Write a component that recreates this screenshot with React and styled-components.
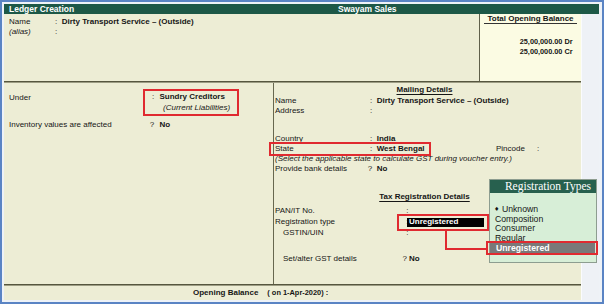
import React from "react";
import styled, { createGlobalStyle } from "styled-components";

const GlobalStyle = createGlobalStyle`
  html, body { margin: 0; padding: 0; background: #fff; }
  body {
    font-family: "Liberation Sans", Arial, sans-serif;
    font-size: 8px;
    color: #161616;
  }
`;

const Stage = styled.div`
  position: relative;
  width: 606px;
  height: 306px;
  overflow: hidden;
`;

const Frame = styled.div`
  width: 604px;
  height: 304px;
  box-sizing: border-box;
  border: 2px solid #5a84c4;
  padding: 2px 3px 2px 2px;
  background: #eef2f7;
  display: flex;
  flex-direction: column;
`;

const TitleBar = styled.div`
  flex: none;
  height: 10px;
  background: #1d5847;
  color: #fff;
  font-weight: bold;
  font-size: 8.5px;
  line-height: 10px;
  display: flex;
  padding-left: 5px;
  white-space: nowrap;
`;

const Title = styled.span`
  flex: none;
  width: 329px;
`;

const Body = styled.div`
  flex: 1;
  display: flex;
  min-height: 0;
`;

const Main = styled.div`
  flex: none;
  width: 577px;
  background: #ededd5;
  display: flex;
  flex-direction: column;
`;

const Strip = styled.div`
  flex: 1;
  background: #eef1f6;
  border-left: 1px solid #fafbfd;
`;

const Top = styled.div`
  flex: none;
  height: 67px;
  display: flex;
`;

const TopLeft = styled.div`
  flex: 1;
  padding: 2.5px 0 0 5px;
`;

const BalancePanel = styled.div`
  flex: none;
  width: 102px;
  box-sizing: border-box;
  border-left: 1px solid #5f5f4a;
  background: #fbfbe3;
`;

const PanelHeading = styled.div`
  width: fit-content;
  margin: 0 auto;
  padding: 0 3px;
  font-weight: bold;
  line-height: 9px;
  border-bottom: 1px solid #333;
`;

const Amounts = styled.div`
  margin-top: 13px;
  padding-right: 8.5px;
  text-align: right;
  font-weight: bold;
  font-size: 7.3px;
  line-height: 10px;
`;

const HLine = styled.div`
  flex: none;
  height: 0;
  border-top: 1px solid #56563f;
  border-bottom: 1px solid #9d9d84;
`;

const Middle = styled.div`
  flex: none;
  height: 201px;
  display: flex;
`;

const LeftCol = styled.div`
  flex: none;
  width: 269px;
  box-sizing: border-box;
  padding: 9px 0 0 5px;
`;

const VLine = styled.div`
  flex: none;
  width: 1px;
  background: #67674f;
`;

const RightCol = styled.div`
  flex: 1;
  padding: 1px 0 0 1px;
`;

const Row = styled.div`
  display: flex;
  white-space: nowrap;
  line-height: ${(p) => p.$lh || 10}px;
  margin-top: ${(p) => p.$mt || 0}px;
`;

const Label = styled.span`
  flex: none;
  box-sizing: border-box;
  width: ${(p) => p.$w}px;
  padding-left: ${(p) => p.$indent || 0}px;
  padding-top: ${(p) => p.$pt || 0}px;
  font-style: ${(p) => (p.$italic ? "italic" : "normal")};
`;

const Sep = styled.span`
  flex: none;
  width: 6px;
  padding-right: ${(p) => p.$pr}px;
  padding-top: ${(p) => p.$pt || 0}px;
  text-align: right;
  white-space: pre;
`;

const Value = styled.span`
  flex: none;
  font-weight: bold;
  width: ${(p) => (p.$w ? `${p.$w}px` : "auto")};
`;

const Stack = styled.div`
  display: flex;
  flex-direction: column;
`;

const Sub = styled.span`
  font-style: italic;
  padding-left: 3.5px;
`;

const Heading = styled.div`
  text-align: center;
  font-weight: bold;
  text-decoration: underline;
  text-underline-offset: 1.5px;
  padding-right: 7px;
  line-height: ${(p) => p.$lh}px;
  margin-top: ${(p) => p.$mt || 0}px;
`;

const Note = styled.div`
  font-style: italic;
  line-height: 10px;
`;

const BlackField = styled.span`
  flex: none;
  align-self: center;
  box-sizing: border-box;
  width: 77px;
  height: 8.5px;
  line-height: 8.5px;
  margin-left: -2px;
  padding-left: 2px;
  background: #000;
  color: #fff;
  font-weight: bold;
`;

const Footer = styled.div`
  flex: 1;
  display: flex;
  align-items: center;
  gap: 9px;
  padding: 0 0 1px 189px;
  font-weight: bold;
  white-space: nowrap;
`;

const FooterDate = styled.span`
  font-size: 7.4px;
`;

const Popup = styled.div`
  position: absolute;
  left: 489px;
  top: 179px;
  width: 108px;
  height: 84px;
  box-sizing: border-box;
  border: 1px solid #8d9d90;
  background: #d7eed7;
`;

const PopupHeader = styled.div`
  height: 13px;
  padding-left: 10px;
  background: #27604e;
  color: #fff;
  font-family: "Liberation Serif", "Times New Roman", serif;
  font-size: 11.5px;
  line-height: 13px;
  text-align: center;
  white-space: nowrap;
`;

const List = styled.div`
  padding-top: 11.25px;
  font-size: 8.7px;
`;

const Item = styled.div`
  line-height: ${(p) => (p.$selected ? 11 : 9.5)}px;
  padding-left: ${(p) => (p.$selected ? 6 : 5)}px;
  margin-right: ${(p) => (p.$selected ? 1 : 0)}px;
  background: ${(p) => (p.$selected ? "#797979" : "transparent")};
  color: ${(p) => (p.$selected ? "#fff" : "#161616")};
  font-weight: ${(p) => (p.$selected ? "bold" : "normal")};
`;

const Diamond = styled.span`
  font-family: "DejaVu Sans", sans-serif;
  font-size: 6px;
  margin: 0 2.5px 0 -1px;
  vertical-align: 1px;
`;

const RedBox = styled.div`
  position: absolute;
  left: ${(p) => p.$x}px;
  top: ${(p) => p.$y}px;
  width: ${(p) => p.$w}px;
  height: ${(p) => p.$h}px;
  box-sizing: border-box;
  border: 2px solid #e02a30;
`;

const Elbow = styled.div`
  position: absolute;
  left: 445px;
  top: 230px;
  width: 42px;
  height: 20px;
  box-sizing: border-box;
  border-left: 2px solid #e02a30;
  border-bottom: 2px solid #e02a30;
`;

const regTypes = ["Composition", "Consumer", "Regular"];

export default function App() {
  return (
    <>
      <GlobalStyle />
      <Stage>
        <Frame>
          <TitleBar>
            <Title>Ledger Creation</Title>
            <span>Swayam Sales</span>
          </TitleBar>
          <Body>
            <Main>
              <Top>
                <TopLeft>
                  <Row $lh={10.5}>
                    <Label $w={42.2}>Name</Label>
                    <Sep $pr={4.5}>:</Sep>
                    <Value>Dirty Transport Service – (Outside)</Value>
                  </Row>
                  <Row $lh={10.5}>
                    <Label $w={42.2} $italic>(alias)</Label>
                    <Sep $pr={4.5}>:</Sep>
                  </Row>
                </TopLeft>
                <BalancePanel>
                  <PanelHeading>Total Opening Balance</PanelHeading>
                  <Amounts>
                    <div>25,00,000.00 Dr</div>
                    <div>25,00,000.00 Cr</div>
                  </Amounts>
                </BalancePanel>
              </Top>
              <HLine />
              <Middle>
                <LeftCol>
                  <Row $lh={10.5}>
                    <Label $w={139.2} $pt={1}>Under</Label>
                    <Sep $pr={5.3}>:</Sep>
                    <Stack>
                      <Value>Sundry Creditors</Value>
                      <Sub>(Current Liabilities)</Sub>
                    </Stack>
                  </Row>
                  <Row $mt={7}>
                    <Label $w={139.2}>Inventory values are affected</Label>
                    <Sep $pr={5.3}>?</Sep>
                    <Value>No</Value>
                  </Row>
                </LeftCol>
                <VLine />
                <RightCol>
                  <Heading $lh={11}>Mailing Details</Heading>
                  <Row $lh={9.5} $mt={1}>
                    <Label $w={91.2}>Name</Label>
                    <Sep $pr={4.5}>:</Sep>
                    <Value>Dirty Transport Service – (Outside)</Value>
                  </Row>
                  <Row $lh={9.5}>
                    <Label $w={91.2}>Address</Label>
                    <Sep $pr={4.5}>:</Sep>
                  </Row>
                  <Row $mt={19.3}>
                    <Label $w={91.2}>Country</Label>
                    <Sep $pr={4.5}>:</Sep>
                    <Value>India</Value>
                  </Row>
                  <Row>
                    <Label $w={91.2}>State</Label>
                    <Sep $pr={4.5}>:</Sep>
                    <Value $w={119.3}>West Bengal</Value>
                    <Label $w={37.2}>Pincode</Label>
                    <Sep $pr={4.5}>:</Sep>
                  </Row>
                  <Note>(Select the applicable state to calculate GST during voucher entry.)</Note>
                  <Row>
                    <Label $w={91.2}>Provide bank details</Label>
                    <Sep $pr={4.5}>?</Sep>
                    <Value>No</Value>
                  </Row>
                  <Heading $lh={10} $mt={17.4}>Tax Registration Details</Heading>
                  <Row $lh={10.5} $mt={4.3}>
                    <Label $w={127.5}>PAN/IT No.</Label>
                    <Sep $pr={0.5}>:</Sep>
                  </Row>
                  <Row $lh={12}>
                    <Label $w={127.5}>Registration type</Label>
                    <Sep $pr={0.5}>:</Sep>
                    <BlackField>Unregistered</BlackField>
                  </Row>
                  <Row $lh={9.5}>
                    <Label $w={127.5} $indent={8}>GSTIN/UIN</Label>
                    <Sep $pr={0.5}>:</Sep>
                  </Row>
                  <Row $mt={16.5}>
                    <Label $w={127.5} $indent={8}>Set/alter GST details</Label>
                    <Sep $pr={0.5}>{"? "}</Sep>
                    <Value>No</Value>
                  </Row>
                </RightCol>
              </Middle>
              <HLine />
              <Footer>
                <span>Opening Balance</span>
                <FooterDate>( on 1-Apr-2020) :</FooterDate>
              </Footer>
            </Main>
            <Strip />
          </Body>
        </Frame>

        <Popup>
          <PopupHeader>Registration Types</PopupHeader>
          <List>
            <Item>
              <Diamond>♦</Diamond>Unknown
            </Item>
            {regTypes.map((t) => (
              <Item key={t}>{t}</Item>
            ))}
            <Item $selected>Unregistered</Item>
          </List>
        </Popup>

        <RedBox $x={143} $y={89} $w={96} $h={27} />
        <RedBox $x={269} $y={142} $w={162} $h={14} />
        <RedBox $x={397} $y={214} $w={92} $h={17} />
        <Elbow />
        <RedBox $x={486} $y={241} $w={112} $h={14} />
      </Stage>
    </>
  );
}
